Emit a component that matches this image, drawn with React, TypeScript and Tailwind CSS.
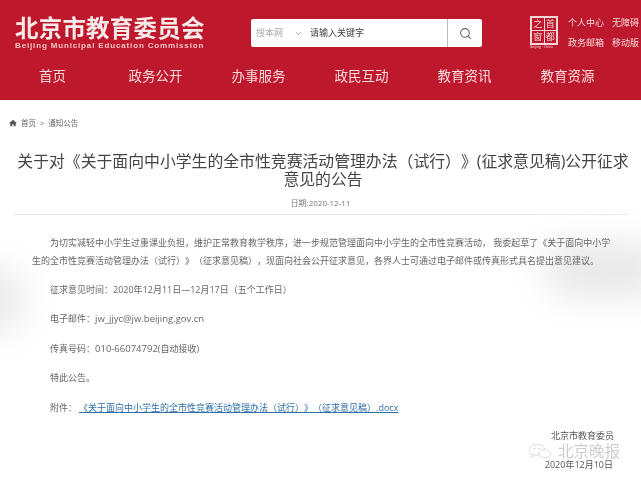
import { Search, ChevronDown } from 'lucide-react';

const CJK = "font-['Open_Sans','Noto_Sans_CJK_SC',sans-serif]";

const NAV = ['首页', '政务公开', '办事服务', '政民互动', '教育资讯', '教育资源'];

function HomeIcon() {
  return (
    <svg viewBox="0 0 12 12" className="h-[8px] w-[8px] text-[#555]" fill="currentColor">
      <path d="M6 1 1 5.5V7h1v4h3V8h2v3h3V7h1V5.5z" />
    </svg>
  );
}

function WechatMark() {
  return (
    <svg viewBox="0 0 28 20" className="h-[17px] w-[24px] text-[#d6d6d6]" fill="none" stroke="currentColor" strokeWidth="1">
      <ellipse cx="10.5" cy="8" rx="9" ry="6.5" />
      <path d="M5 13l-1 4 4-2.4" />
      <ellipse cx="19.5" cy="12.5" rx="7" ry="5" fill="#fff" />
      <circle cx="7.5" cy="6.5" r=".8" fill="currentColor" />
      <circle cx="13" cy="6.5" r=".8" fill="currentColor" />
    </svg>
  );
}

export default function App() {
  return (
    <div className={`relative h-[481px] w-[641px] overflow-hidden bg-white blur-[0.5px] [text-spacing-trim:space-all] ${CJK}`}>
      {/* soft background blotches */}
      <div className="absolute left-[-45px] top-[270px] h-[60px] w-[70px] rounded-full bg-[#e8e8e8] blur-[18px]" />
      <div className="absolute left-[545px] top-[245px] h-[50px] w-[120px] rounded-full bg-[#e6e6e6] blur-[18px]" />

      {/* header */}
      <header className="relative h-[100px] bg-[#bd182b]">
        <div className="flex h-[66px] items-start">
          <div className="ml-[15px] mt-[15px] w-[200px]">
            <div className="text-[23.5px] font-bold leading-[26px] tracking-[0.2px] text-[#fbeaea]">北京市教育委员会</div>
            <div className="whitespace-nowrap font-['Liberation_Sans',sans-serif] text-[8px] font-bold leading-[10px] tracking-[0.85px] text-[#f4c4c8]">
              Beijing Municipal Education Commission
            </div>
          </div>

          <div className="ml-[36px] mt-[19px] flex h-[28px] w-[231px] items-center rounded-[2px] bg-white">
            <span className="ml-[5px] text-[9px] text-[#aaa]">搜本网</span>
            <ChevronDown className="ml-[11px] h-[9px] w-[9px] text-[#888]" />
            <span className="ml-[7px] flex-1 text-[9px] text-[#444]">请输入关键字</span>
            <div className="flex h-full w-[35px] items-center justify-center border-l border-[#bbb]">
              <Search className="h-[13px] w-[13px] text-[#666]" strokeWidth={2} />
            </div>
          </div>

          <div className="ml-[48px] mt-[16px] w-[30px]">
            <div className="grid h-[29px] w-[28px] grid-cols-2 grid-rows-2 gap-[1px] border-2 border-[#f3d5d8] bg-[#f3d5d8] text-center text-[9px] leading-[12px] text-[#f3d5d8]">
              <span className="bg-[#bd182b]">之</span>
              <span className="bg-[#bd182b]">首</span>
              <span className="bg-[#bd182b]">窗</span>
              <span className="bg-[#bd182b]">都</span>
            </div>
            <div className="whitespace-nowrap text-[3.5px] leading-[4px] text-[#f3d5d8]">Beijing · China</div>
          </div>

          <div className="ml-[8px] mt-[16px] grid grid-cols-[44px_auto] gap-y-[7px] whitespace-nowrap text-[9px] leading-[13px] text-[#f7d9dc]">
            <span>个人中心</span>
            <span>无障碍</span>
            <span>政务邮箱</span>
            <span>移动版</span>
          </div>
        </div>

        <nav className="ml-[1px] grid w-[618px] grid-cols-6 text-center text-[13.5px] leading-[20px] text-[#f9dadc]">
          {NAV.map((item) => (
            <span key={item}>{item}</span>
          ))}
        </nav>
      </header>

      {/* breadcrumb */}
      <div className="relative ml-[9px] mt-[18px] flex items-center gap-[4px] text-[7.5px] leading-[10px] text-[#666]">
        <HomeIcon />
        <span>首页</span>
        <span>&gt;</span>
        <span>通知公告</span>
      </div>

      {/* article */}
      <main className="relative">
        <h1 className="ml-[13px] mt-[24px] w-[620px] text-center text-[15.85px] leading-[18px] text-[#444]">
          关于对《关于面向中小学生的全市性竞赛活动管理办法（试行）》(征求意见稿)公开征求意见的公告
        </h1>
        <div className="mt-[9px] text-center text-[8px] leading-[12px] text-[#777]">日期:2020-12-11</div>

        <div className="mx-[13px] mt-[5px] border-t border-[#e8e8e8]" />

        <div className="ml-[32px] mr-[28px] mt-[19px] text-[9px] leading-[17.5px] text-[#666]">
          <p className="indent-[18px]">
            为切实减轻中小学生过重课业负担，维护正常教育教学秩序，进一步规范管理面向中小学生的全市性竞赛活动， 我委起草了《关于面向中小学生的全市性竞赛活动管理办法（试行）》（征求意见稿），现面向社会公开征求意见，各界人士可通过电子邮件或传真形式具名提出意见建议。
          </p>
          <div className="ml-[18px] mt-[11.5px] flex flex-col gap-[12px]">
            <p>征求意见时间：2020年12月11日—12月17日（五个工作日）</p>
            <p>
              电子邮件：<span className="text-[9.5px]">jw_jjyc@jw.beijing.gov.cn</span>
            </p>
            <p>
              传真号码：<span className="text-[9.5px]">010-66074792</span>(自动接收)
            </p>
            <p>特此公告。</p>
            <p>
              附件：
              <a className="ml-[2px] text-[#2f6fa8] underline">《关于面向中小学生的全市性竞赛活动管理办法（试行）》（征求意见稿）.docx</a>
            </p>
          </div>
        </div>
      </main>

      {/* signature */}
      <div className="absolute right-[27px] top-[430px] text-right text-[9px] leading-[12px] text-[#555]">北京市教育委员</div>
      <div className="absolute right-[28px] top-[459px] text-right text-[9px] leading-[12px] text-[#555]">2020年12月10日</div>

      {/* wechat watermark */}
      <div className="absolute right-[21px] top-[443px] flex items-center gap-[6px] text-[15.5px] leading-[15px] text-[#cdcdcd]">
        <WechatMark />
        <span>北京晚报</span>
      </div>
    </div>
  );
}
